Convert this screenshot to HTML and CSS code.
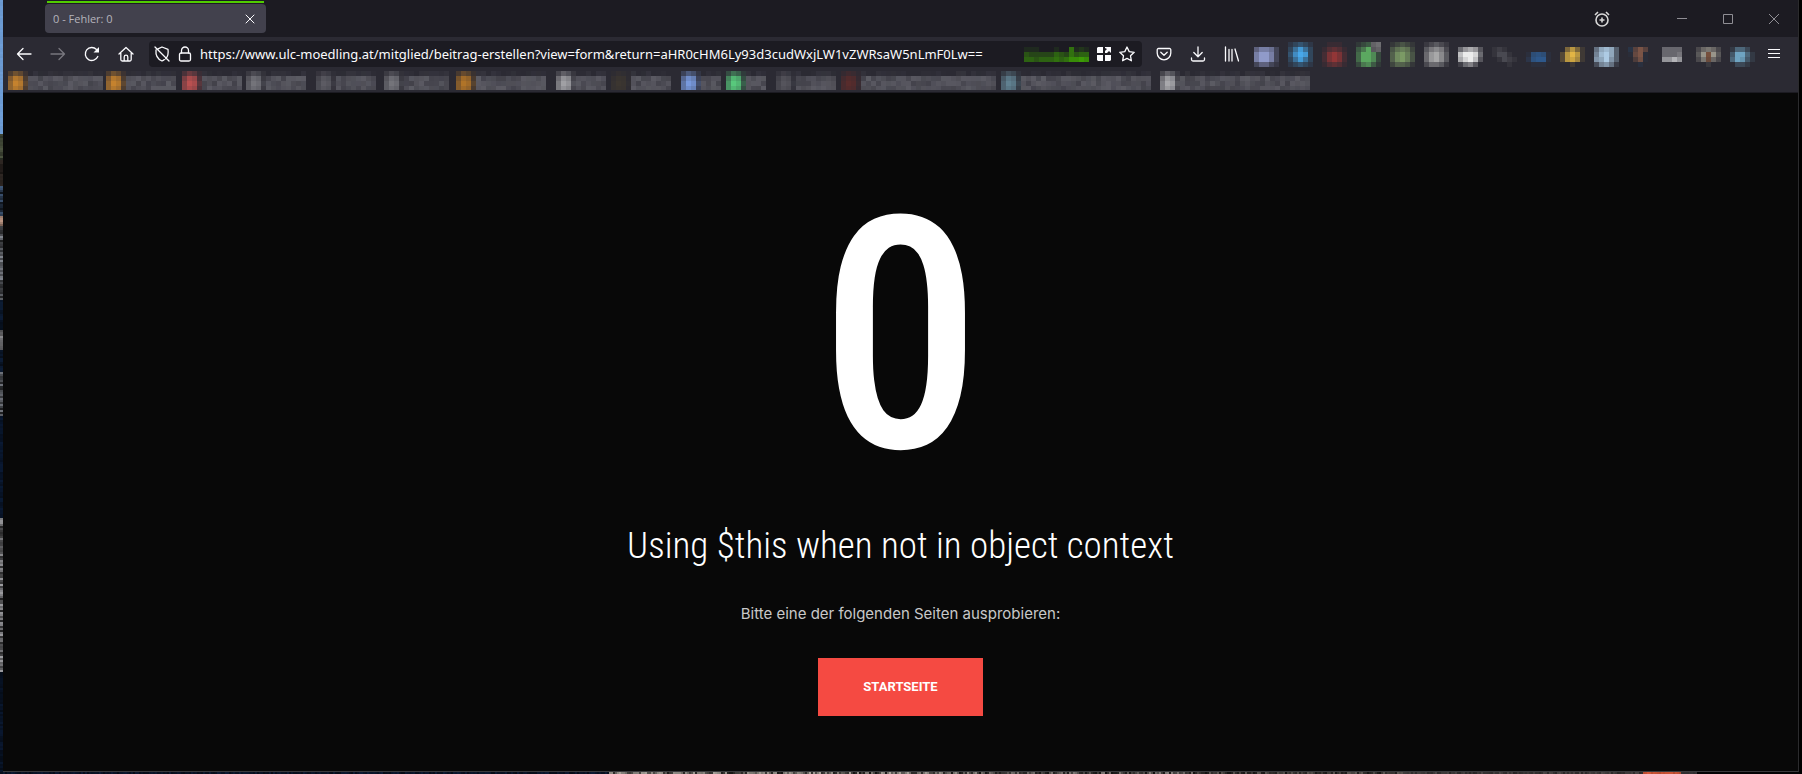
FILE: index.html
```
<!DOCTYPE html>
<html lang="de">
<head>
  <meta charset="UTF-8">
  <meta name="viewport" content="width=device-width, initial-scale=1.0">
  <title>0 - Fehler: 0</title>
  <link rel="stylesheet" href="styles.css">
</head>
<body>

  <!-- desktop behind the window -->
  <div class="desktop-left"></div>

  <div class="window">

    <!-- tab bar -->
    <header class="tabbar">
      <div class="tab">
        <span class="tab-title">0 - Fehler: 0</span>
        <button class="tab-close" aria-label="Tab schließen">
          <svg width="10" height="10" viewBox="0 0 10 10"><path d="M1 1l8 8M9 1l-8 8"/></svg>
        </button>
      </div>
      <div class="window-buttons">
        <button class="alarm" aria-label="Wecker">
          <svg width="16" height="16" viewBox="0 0 16 16"><circle cx="8" cy="9" r="6"/><path d="M8 6.500v5M5.500 9h5M1 4l3-3M15 4l-3-3"/></svg>
        </button>
        <button aria-label="Minimieren"><svg width="10" height="10" viewBox="0 0 10 10"><path d="M0 4.500h10"/></svg></button>
        <button aria-label="Maximieren"><svg width="10" height="10" viewBox="0 0 10 10"><path d="M.5 .5h9v9h-9z"/></svg></button>
        <button aria-label="Schließen"><svg width="10" height="10" viewBox="0 0 10 10"><path d="M0 0l10 10M10 0L0 10"/></svg></button>
      </div>
    </header>

    <!-- navigation -->
    <nav class="toolbar">
      <div class="nav-buttons">
        <button aria-label="Zurück"><svg width="16" height="16" viewBox="0 0 16 16"><path d="M15 8H1.500M7 2.500L1.500 8l5.500 5.500"/></svg></button>
        <button aria-label="Vor" disabled><svg width="16" height="16" viewBox="0 0 16 16"><path d="M1 8h13.500M9 2.500L14.500 8 9 13.500"/></svg></button>
        <button aria-label="Neu laden"><svg width="16" height="16" viewBox="0 0 16 16"><path d="M13.800 10.500A6.500 6.500 0 1 1 12.500 3.500L14 5"/><path class="fill" d="M15 1v5.500H9.500z"/></svg></button>
        <button aria-label="Startseite"><svg width="16" height="16" viewBox="0 0 16 16"><path d="M1 8l7-6.500L15 8M2.800 7v6.500a1.500 1.500 0 0 0 1.500 1.500h7.400a1.500 1.500 0 0 0 1.500-1.500V7M6.200 15v-4a1.800 1.800 0 0 1 3.600 0v4"/></svg></button>
      </div>

      <div class="urlbar">
        <svg width="16" height="16" viewBox="0 0 16 16"><path d="M4 2.800L8 1l6 2.300c.6 4-.2 7.200-2.300 9.400M2 4c-.5 5 1.300 9 6 11 .9-.3 1.700-.8 2.400-1.400M1 1l14 14"/></svg>
        <svg width="14" height="16" viewBox="0 0 14 16"><rect x="1.500" y="7" width="11" height="8" rx="1.500"/><path d="M3.500 7V4.500a3.500 3.500 0 0 1 7 0V7"/></svg>
        <input type="text" aria-label="Adresse" value="https://www.ulc-moedling.at/mitglied/beitrag-erstellen?view=form&amp;return=aHR0cHM6Ly93d3cudWxjLW1vZWRsaW5nLmF0Lw==">
        <span class="container-label"></span>
        <svg width="14" height="14" viewBox="0 0 14 14"><path class="fill" d="M1 0h5v6H0V1zM0 8h6v6H1l-1-1zM8 8h6v5l-1 1H8zM8 0h6v6l-2-2-2 2H8V4l2-2-2-1z"/></svg>
        <svg width="16" height="16" viewBox="0 0 16 16"><path d="M8 1l2.200 4.600 5 .7-3.700 3.500.9 5L8 12.400l-4.400 2.400.9-5L.8 6.300l5-.7z"/></svg>
      </div>

      <div class="tool-buttons">
        <button aria-label="Pocket"><svg width="16" height="16" viewBox="0 0 16 16"><path d="M2.500 2.500h11a1.300 1.300 0 0 1 1.300 1.300V7a6.800 6.800 0 0 1-13.600 0V3.800a1.300 1.300 0 0 1 1.300-1.300zM4.800 6.300L8 9.300l3.200-3"/></svg></button>
        <button aria-label="Downloads"><svg width="16" height="16" viewBox="0 0 16 16"><path d="M8 1v9.500M3.800 6.500L8 10.700l4.200-4.200M1.500 12v1.500A1.500 1.500 0 0 0 3 15h10a1.500 1.500 0 0 0 1.500-1.500V12"/></svg></button>
        <button aria-label="Bibliothek"><svg width="16" height="16" viewBox="0 0 16 16"><path d="M1.500 1v14M5 3.500V15M8 3.500V15M11 3l3.500 12"/></svg></button>
      </div>
      <div class="extensions"></div>
      <button class="menu" aria-label="Menü"><svg width="12" height="12" viewBox="0 0 12 12"><path d="M0 1.500h12M0 5.500h12M0 9.500h12"/></svg></button>
    </nav>

    <div class="bookmarks"></div>

    <!-- page -->
    <main>
      <h1>0</h1>
      <h2>Using $this when not in object context</h2>
      <p>Bitte eine der folgenden Seiten ausprobieren:</p>
      <a class="btn" href="#">STARTSEITE</a>
    </main>
  </div>

  <div class="desktop-bottom"></div>

  <script src="script.js"></script>
</body>
</html>
```
FILE: styles.css
```
:root {
  --frame: #1c1b22;
  --toolbar: #2b2a33;
  --icon: #fbfbfe;
}

* {
  box-sizing: border-box;
}

body {
  margin: 0;
  min-height: 100vh;
  display: grid;
  grid-template-columns: 3px 1fr 3px;
  grid-template-rows: 1fr 2px;
  background: #000;
  color: #fff;
  font-family: "Open Sans", "Noto Sans", sans-serif;
  overflow: hidden;
}

button {
  display: flex;
  align-items: center;
  justify-content: center;
  padding: 0;
  border: none;
  background: none;
  color: var(--icon);
}

svg {
  display: block;
  flex: none;
  fill: none;
  stroke: currentColor;
  stroke-width: 1.3;
  stroke-linecap: round;
  stroke-linejoin: round;
}
svg .fill {
  fill: currentColor;
  stroke: none;
}
svg.mosaic {
  stroke: none;
  shape-rendering: crispEdges;
}

/* desktop */
.desktop-left {
  grid-row: 1 / 3;
  overflow: hidden;
}
.desktop-bottom {
  grid-column: 2;
  overflow: hidden;
}

.window {
  display: flex;
  flex-direction: column;
  min-width: 0;
  background: #080808;
  border-right: 1px solid #2b2b2d;
  border-bottom: 1px solid #3a3a3d;
}

/* tab bar */
.tabbar {
  display: flex;
  justify-content: space-between;
  height: 37px;
  padding-left: 42px;
  background: var(--frame);
}
.tab {
  position: relative;
  display: flex;
  align-items: center;
  justify-content: space-between;
  width: 221px;
  height: 29px;
  margin-top: 4px;
  padding: 0 10px 0 8px;
  border-radius: 4px;
  background: #42414d;
  font-size: 11px;
  color: #b5b4bc;
}
.tab::before {
  content: "";
  position: absolute;
  top: -3px;
  left: 2px;
  right: 2px;
  height: 2px;
  background: #51cd00;
}
.tab-close {
  width: 12px;
  height: 12px;
}
.tab-close svg {
  stroke-width: 1;
}
.window-buttons {
  display: flex;
  align-items: center;
  padding-right: 1px;
}
.window-buttons button {
  width: 46px;
  height: 35px;
  color: #8f8e94;
}
.window-buttons svg {
  stroke-width: 1;
  stroke-linecap: butt;
}
.window-buttons .alarm {
  margin-right: 34px;
  color: #d8d8d8;
}
.window-buttons .alarm svg {
  stroke-width: 1.6;
}

/* toolbar */
.toolbar {
  display: flex;
  align-items: center;
  height: 34px;
  padding-right: 9px;
  background: var(--toolbar);
}
.toolbar button {
  width: 34px;
  height: 32px;
}
.toolbar button:disabled {
  color: #78777f;
}
.nav-buttons,
.tool-buttons {
  display: flex;
}
.nav-buttons {
  padding: 0 6px 0 4px;
}
.tool-buttons {
  padding: 0 0 0 5px;
}
.urlbar {
  flex: 1;
  display: flex;
  align-items: center;
  gap: 8px;
  min-width: 0;
  height: 26px;
  padding: 0 7px 0 5px;
  border-radius: 4px;
  background: var(--frame);
  color: var(--icon);
}
.urlbar input {
  flex: 1;
  min-width: 0;
  padding: 0;
  border: none;
  outline: none;
  background: none;
  color: var(--icon);
  font: 13px "Noto Sans", "Open Sans", sans-serif;
}
.extensions {
  display: flex;
}
.toolbar .menu {
  width: 30px;
}
.menu svg {
  stroke-width: 1;
  stroke-linecap: butt;
}

.bookmarks {
  display: flex;
  height: 22px;
  padding-left: 5px;
  background: var(--toolbar);
  border-bottom: 1px solid #1c1b22;
  overflow: hidden;
}

/* error page */
main {
  flex: 1;
  display: flex;
  flex-direction: column;
  align-items: center;
  padding: 73px 20px 24px;
  text-align: center;
}
h1 {
  margin: 0 0 18px;
  font: 500 324px/340px "Roboto Condensed", Roboto, sans-serif;
}
h2 {
  margin: 0 0 34px;
  font: 300 37px/44px "Roboto Condensed", Roboto, sans-serif;
}
p {
  margin: 0 0 32px;
  font: 15px/24px Inter, sans-serif;
  color: #c8c8c8;
}
.btn {
  padding: 0 45px;
  background: #f54a42;
  color: #fff;
  font: 700 13px/58px Roboto, sans-serif;
  text-decoration: none;
}
```
FILE: script.js
```
const CELL = 5;

let seed = 7;
function rnd() {
  seed = (seed * 16807) % 2147483647;
  return seed / 2147483647;
}

function rect(x, y, w, h, color, alpha) {
  return `<rect x="${x}" y="${y}" width="${w}" height="${h}" fill="${color}" opacity="${alpha}"/>`;
}

function svg(w, h, body) {
  return `<svg class="mosaic" width="${w}" height="${h}" viewBox="0 0 ${w} ${h}">${body}</svg>`;
}

// digits use the first color, letters the second one
function mosaic(rows, a, b) {
  let body = '';
  rows.forEach((row, y) => {
    [...row].forEach((c, x) => {
      const digit = c >= '0' && c <= '9';
      const level = digit ? Number(c) : c.charCodeAt(0) - 96;
      body += rect(x * CELL, y * CELL, CELL, CELL, digit ? a : b, level / 9);
    });
  });
  return svg(rows[0].length * CELL, rows.length * CELL, body);
}

// extension icons
const extensions = [
  [['00000', '46652', '68862', '68862', '24421'], '#9da8dc'],
  [['12321', '25852', '37982', '25852', '12321'], '#48a8ea'],
  [['01110', '13431', '26862', '26862', '13431'], '#a03838'],
  [['123ef', '358de', '48862', '48862', '25631'], '#62b866', '#909090'],
  [['12321', '35652', '47863', '47863', '24431'], '#86a86c'],
  [['12321', '35652', '47863', '47863', '24431'], '#b8b8b8'],
  [['00000', '35652', '79983', '68972', '13420'], '#ececec'],
  [['00000', '12100', '13310', '01321', '00010'], '#88888c'],
  [['00000', '00000', '16761', '27881', '01110'], '#2f5e96'],
  [['00000', '04741', '27971', '27861', '00100'], '#e2b545'],
  [['00000', '47873', '58973', '67963', '25641'], '#aecbe4'],
  [['00000', 'c4740', 'a57a0', '036a0', '00b00'], '#93614c', '#28486c'],
  [['00000', '44440', '44450', '77970', '00000'], '#b4b4b8'],
  [['00000', '24542', '37g73', '25f42', '00100'], '#b8b4a4', '#8c5c40'],
  [['00000', '14420', '38841', '48731', '02210'], '#78b4d4'],
];
document.querySelector('.extensions').innerHTML =
  extensions.map(e => `<button aria-label="Erweiterung">${mosaic(...e)}</button>`).join('');

document.querySelector('.container-label').innerHTML =
  mosaic(['1110001006121', '4333335436455', '5545556568898'], '#3c9a06');

// bookmarks: icon color, width up to the next one, where the label ends
const bookmarks = [
  ['#c5822e', 98, 93], ['#c5822e', 76, 70], ['#b85050', 64, 60], ['#74747a', 70, 60],
  ['#5c5b63', 68, 60], ['#74747a', 72, 62], ['#b07428', 100, 90], ['#a0a0a4', 55, 46],
  ['#3c3630', 70, 60], ['#7899dc', 45, 36], ['#58c87c', 50, 40], ['#55545c', 65, 60],
  ['#582c2c', 160, 154], ['#608090', 159, 150], ['#a8a8ac', 150, 150],
];
document.querySelector('.bookmarks').innerHTML = bookmarks.map(([color, width, end]) => {
  let body = '';
  const levels = [[2, 4, 3, 1], [5, 8, 7, 2], [6, 9, 8, 3], [6, 8, 7, 2]];
  levels.forEach((row, y) => {
    row.forEach((v, x) => {
      body += rect(x * CELL, y * CELL, CELL, y === 3 ? 4 : CELL, color, v / 9);
    });
    for (let x = 20; x < end; x += CELL) {
      const light = y === 0 ? 0.08 * rnd() : 0.2 + 0.2 * rnd();
      body += rect(x, y * CELL, CELL, y === 3 ? 4 : CELL, '#a4a4ac', light);
    }
  });
  return svg(width, 19, body);
}).join('');

// strips of the wallpaper around the window: end, brightest color, noise
const left = [
  [133, '#6f9fd8', 0.05], [160, '#4c5440', 0.5], [186, '#302824', 0.5], [215, '#405878', 0.8],
  [226, '#c8a08c', 0.5], [300, '#80848c', 0.8], [330, '#0c1c34', 0.5], [350, '#8c8c90', 0.6], [372, '#0c1c34', 0.5],
  [415, '#70747c', 0.8], [518, '#0a1a34', 0.4], [672, '#9c9ca0', 0.8], [774, '#0a1830', 0.5],
];
const bottom = [
  [605, '#0c1a34', 0.6], [980, '#a8a49c', 0.9], [1190, '#84807c', 0.9], [1400, '#5c5854', 0.8],
  [1640, '#4c4848', 0.5], [1678, '#d85838', 0.2], [1694, '#343234', 0.1], [1802, '#020204', 0.1],
];
function strip(parts, vertical) {
  let body = '';
  let pos = 0;
  for (const [end, color, noise] of parts) {
    for (; pos < end; pos += 2) {
      const alpha = 1 - noise * rnd();
      body += vertical ? rect(0, pos, 3, 2, color, alpha) : rect(pos, 0, 2, 3, color, alpha);
    }
  }
  return vertical ? svg(3, 774, body) : svg(1802, 3, body);
}
document.querySelector('.desktop-left').innerHTML = strip(left, true);
document.querySelector('.desktop-bottom').innerHTML = strip(bottom, false);
```
